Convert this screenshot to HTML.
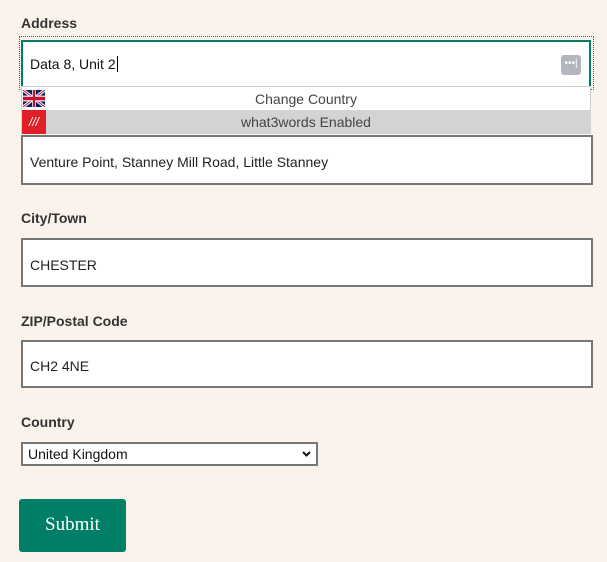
<!DOCTYPE html>
<html><head><style>
body{margin:0;background:#faf3ec;width:607px;height:562px;position:relative;font-family:"Liberation Sans",sans-serif;overflow:hidden}
.l{position:absolute;left:21px;font-weight:bold;font-size:14px;color:#333}
.b{position:absolute;left:21px;width:568px;background:#fff;border:2px solid #777;box-sizing:content-box;font-size:14px;color:#222}
.b span{position:absolute;left:7px}
</style></head><body>
<div class="l" style="top:15px">Address</div>
<div style="position:absolute;left:19px;top:36px;width:573px;height:52px;border:1px dotted #007f66"></div>
<div class="b" style="top:40px;height:44px;border-color:#007f66;width:566px"><span style="top:14px;color:#111">Data 8, Unit 2<span style="position:static;border-left:1px solid #000;margin-left:1px"></span></span>
<div style="position:absolute;right:8px;top:13px;width:20px;height:20px;background:#b3b6c0;border-radius:3px;color:#fff;font-size:10px;text-align:center;line-height:18px">•••|</div></div>
<div style="position:absolute;left:21px;top:86px;width:570px;height:24px;background:#fff;border-left:1px solid #ccc;border-right:1px solid #ccc;border-top:1px solid #ccc;box-sizing:border-box">
<svg style="position:absolute;left:1px;top:3px" width="22" height="17" viewBox="0 0 60 30" preserveAspectRatio="none"><rect width="60" height="30" fill="#012169"/><path d="M0 0L60 30M60 0L0 30" stroke="#fff" stroke-width="6"/><path d="M0 0L60 30M60 0L0 30" stroke="#C8102E" stroke-width="2"/><path d="M30 0V30M0 15H60" stroke="#fff" stroke-width="10"/><path d="M30 0V30M0 15H60" stroke="#C8102E" stroke-width="6"/></svg>
<div style="text-align:center;font-size:14px;color:#444;line-height:24px">Change Country</div></div>
<div style="position:absolute;left:21px;top:110px;width:570px;height:24px;background:#d3d3d3">
<div style="position:absolute;left:1px;top:0;width:24px;height:24px;background:#e11f26;color:#fff;font-size:12px;font-style:italic;line-height:24px;text-align:center">///</div>
<div style="text-align:center;font-size:14px;color:#444;line-height:24px">what3words Enabled</div></div>
<div class="b" style="top:135px;height:46px"><span style="top:17px">Venture Point, Stanney Mill Road, Little Stanney</span></div>
<div class="l" style="top:210px">City/Town</div>
<div class="b" style="top:238px;height:45px"><span style="top:17px">CHESTER</span></div>
<div class="l" style="top:313px">ZIP/Postal Code</div>
<div class="b" style="top:340px;height:44px"><span style="top:16px">CH2 4NE</span></div>
<div class="l" style="top:414px">Country</div>
<div style="position:absolute;left:21px;top:442px;width:293px;height:20px;background:#fff;border:2px solid #777;font-size:14px;line-height:20px;color:#111"><span style="margin-left:5px">United Kingdom</span><svg style="position:absolute;right:5px;top:7px" width="9" height="6" viewBox="0 0 9 6"><path d="M1 1L4.5 4.5L8 1" stroke="#111" stroke-width="2" fill="none"/></svg></div>
<div style="position:absolute;left:19px;top:499px;width:107px;height:53px;background:#007f66;border-radius:3px;color:#fff;font-family:'Liberation Serif',serif;font-size:19px;text-align:center;line-height:52px">Submit</div>
</body></html>
